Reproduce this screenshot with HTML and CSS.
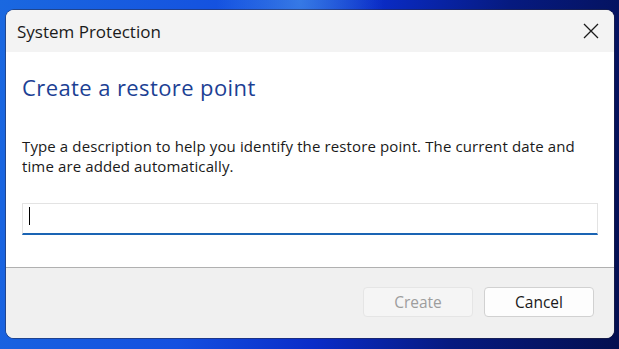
FILE: index.html
```html
<!DOCTYPE html>
<html>
<head>
<meta charset="utf-8">
<link rel="stylesheet" href="styles.css">
</head>
<body>
<div class="desktop">
  <div class="window">
    <div class="titlebar">
      <span class="title">System Protection</span>
      <div class="close">
        <svg width="16" height="16" viewBox="0 0 16 16"><path d="M1 1 L15 15 M15 1 L1 15" stroke="#1a1a1a" stroke-width="1.3" fill="none"/></svg>
      </div>
    </div>
    <div class="content">
      <h1 class="heading">Create a restore point</h1>
      <p class="desc">Type a description to help you identify the restore point. The current date and time are added automatically.</p>
      <div class="input"><span class="caret"></span></div>
    </div>
    <div class="footer">
      <button class="btn disabled">Create</button>
      <button class="btn">Cancel</button>
    </div>
  </div>
</div>
</body>
</html>
```
FILE: styles.css
```css
html, body {
  margin: 0;
  padding: 0;
  width: 619px;
  height: 349px;
  overflow: hidden;
}
.desktop {
  width: 619px;
  height: 349px;
  box-sizing: border-box;
  padding: 10px 5px 11px 6px;
  background:
    radial-gradient(ellipse 120px 300px at 300px 0px, rgba(80,160,240,0.6), transparent 70%),
    linear-gradient(100deg, #1a68e0 0%, #1450e0 35%, #0a2cc8 55%, #061a80 75%, #040f50 100%);
  font-family: "Segoe UI", "Open Sans", "Noto Sans", sans-serif;
}
.window {
  width: 608px;
  height: 328px;
  border-radius: 8px;
  overflow: hidden;
  display: flex;
  flex-direction: column;
  background: #fff;
  box-shadow: 0 0 0 1px rgba(40,40,60,0.5);
}
.titlebar {
  height: 42px;
  background: #f3f3f3;
  display: flex;
  align-items: center;
  justify-content: space-between;
  padding-left: 11px;
}
.title {
  font-size: 17px;
  color: #1a1a1a;
}
.close {
  width: 46px;
  height: 42px;
  display: flex;
  align-items: center;
  justify-content: center;
}
.content {
  height: 215px;
  background: #fff;
  padding: 0 16px;
  border-bottom: 1px solid #b0b0b0;
}
.heading {
  margin: 20px 0 0 0;
  font-size: 22px;
  letter-spacing: 0.4px;
  font-weight: normal;
  color: #1c3f94;
  line-height: 30px;
}
.desc {
  margin: 34px 0 0 0;
  font-size: 15px;
  letter-spacing: 0.12px;
  line-height: 20px;
  color: #1a1a1a;
}
.input {
  margin-top: 27px;
  border: 1px solid #e3e3e3;
  border-bottom: 2px solid #1a64b4;
  box-sizing: border-box;
  height: 32px;
  padding: 3px 6px;
}
.caret {
  display: block;
  width: 1px;
  height: 18px;
  background: #000;
}
.footer {
  flex: 1;
  background: #f0f0f0;
  display: flex;
  justify-content: flex-end;
  align-items: flex-start;
  padding: 19px 20px 0 0;
  gap: 11px;
}
.btn {
  width: 110px;
  height: 30px;
  border-radius: 4px;
  border: 1px solid #d1d1d1;
  background: #fdfdfd;
  font-family: inherit;
  font-size: 15.5px;
  color: #1a1a1a;
  padding: 0;
}
.btn.disabled {
  background: #f5f5f5;
  border-color: #e5e5e5;
  color: #9d9d9d;
}
```
